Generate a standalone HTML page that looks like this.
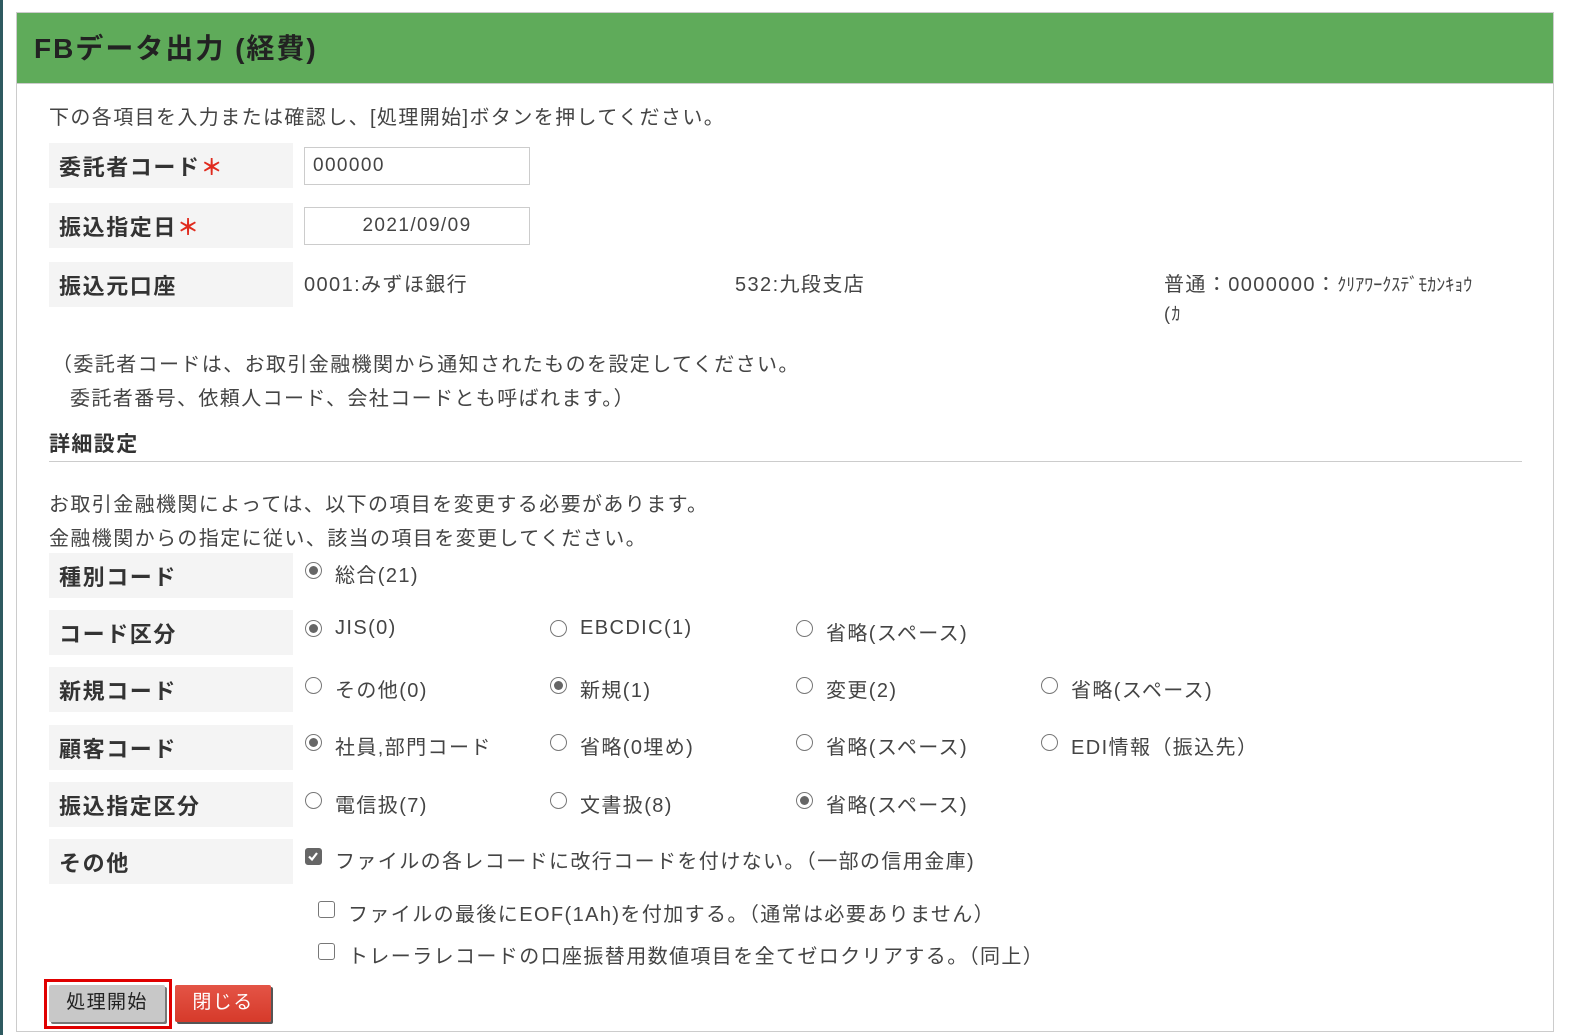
<!DOCTYPE html>
<html><head><meta charset="utf-8"><style>
*{margin:0;padding:0;box-sizing:border-box}
body{width:1573px;height:1035px;background:#fff;position:relative;overflow:hidden;font-family:"Liberation Sans","Noto Sans CJK JP",sans-serif;color:#444;font-size:20px;letter-spacing:1.4px}
.a{position:absolute;white-space:nowrap}
.lb{position:absolute;left:49px;width:244px;height:45px;background:#f4f4f4;font-weight:bold;font-size:22px;color:#333;padding:7px 0 0 10px;letter-spacing:1.6px}
.req{color:#e02b1e}
.r{position:absolute;width:17px;height:17px;border:1.5px solid #777;border-radius:50%;background:#fff}
.r.on::after{content:"";position:absolute;left:2.5px;top:2.5px;width:9px;height:9px;border-radius:50%;background:#666}
.cb{position:absolute;width:17px;height:17px;border:1.5px solid #777;border-radius:3px;background:#fff}
.cb.on{background:#666;border-color:#666}
.inp{position:absolute;left:304px;width:226px;height:38px;border:1.5px solid #ccc;background:#fff;padding:7px 8px;font-size:19px}
</style></head><body>
<div class="a" style="left:0;top:0;width:3px;height:1035px;background:#2e5a60"></div>
<div class="a" style="left:16px;top:12px;width:1538px;height:1020px;border:1px solid #ccc;border-top:none"></div>
<div class="a" style="left:16px;top:12px;width:1538px;height:72px;background:#5fab5a;border:1px solid #ccc"></div>
<div class="a" style="left:34px;top:27px;font-size:28px;font-weight:bold;color:#222;letter-spacing:2px">FBデータ出力 (経費)</div>
<div class="a" style="left:49px;top:101px">下の各項目を入力または確認し、[処理開始]ボタンを押してください。</div>

<div class="lb" style="top:143px">委託者コード<span class="req">＊</span></div>
<div class="inp" style="top:147px">000000</div>
<div class="lb" style="top:203px">振込指定日<span class="req">＊</span></div>
<div class="inp" style="top:207px;text-align:center">2021/09/09</div>
<div class="lb" style="top:262px">振込元口座</div>
<div class="a" style="left:304px;top:268px">0001:みずほ銀行</div>
<div class="a" style="left:735px;top:268px">532:九段支店</div>
<div class="a" style="left:1164px;top:268px">普通：0000000：<span style="font-size:18px;letter-spacing:0">ｸﾘｱﾜｰｸｽﾃﾞﾓｶﾝｷｮｳ</span></div>
<div class="a" style="left:1164px;top:300px;font-size:18px">(ｶ</div>

<div class="a" style="left:52px;top:348px">（委託者コードは、お取引金融機関から通知されたものを設定してください。</div>
<div class="a" style="left:70px;top:382px">委託者番号、依頼人コード、会社コードとも呼ばれます。）</div>
<div class="a" style="left:49px;top:428px;font-weight:bold;font-size:21px;color:#333">詳細設定</div>
<div class="a" style="left:49px;top:461px;width:1473px;height:1px;background:#ccc"></div>
<div class="a" style="left:49px;top:488px">お取引金融機関によっては、以下の項目を変更する必要があります。</div>
<div class="a" style="left:49px;top:522px">金融機関からの指定に従い、該当の項目を変更してください。</div>

<div class="lb" style="top:553px">種別コード</div>
<div class="r on" style="left:305px;top:562px"></div><div class="a" style="left:335px;top:559px">総合(21)</div>

<div class="lb" style="top:610px">コード区分</div>
<div class="r on" style="left:305px;top:620px"></div><div class="a" style="left:335px;top:617px">JIS(0)</div>
<div class="r" style="left:550px;top:620px"></div><div class="a" style="left:580px;top:617px">EBCDIC(1)</div>
<div class="r" style="left:796px;top:620px"></div><div class="a" style="left:826px;top:617px">省略(スペース)</div>

<div class="lb" style="top:667px">新規コード</div>
<div class="r" style="left:305px;top:677px"></div><div class="a" style="left:335px;top:674px">その他(0)</div>
<div class="r on" style="left:550px;top:677px"></div><div class="a" style="left:580px;top:674px">新規(1)</div>
<div class="r" style="left:796px;top:677px"></div><div class="a" style="left:826px;top:674px">変更(2)</div>
<div class="r" style="left:1041px;top:677px"></div><div class="a" style="left:1071px;top:674px">省略(スペース)</div>

<div class="lb" style="top:725px">顧客コード</div>
<div class="r on" style="left:305px;top:734px"></div><div class="a" style="left:335px;top:731px">社員,部門コード</div>
<div class="r" style="left:550px;top:734px"></div><div class="a" style="left:580px;top:731px">省略(0埋め)</div>
<div class="r" style="left:796px;top:734px"></div><div class="a" style="left:826px;top:731px">省略(スペース)</div>
<div class="r" style="left:1041px;top:734px"></div><div class="a" style="left:1071px;top:731px">EDI情報（振込先）</div>

<div class="lb" style="top:782px">振込指定区分</div>
<div class="r" style="left:305px;top:792px"></div><div class="a" style="left:335px;top:789px">電信扱(7)</div>
<div class="r" style="left:550px;top:792px"></div><div class="a" style="left:580px;top:789px">文書扱(8)</div>
<div class="r on" style="left:796px;top:792px"></div><div class="a" style="left:826px;top:789px">省略(スペース)</div>

<div class="lb" style="top:839px">その他</div>
<div class="cb on" style="left:305px;top:848px"><svg width="14" height="14" viewBox="0 0 14 14" style="position:absolute;left:0;top:0"><path d="M3 7.5l3 3 5-6.5" stroke="#fff" stroke-width="2.2" fill="none"/></svg></div>
<div class="a" style="left:335px;top:845px">ファイルの各レコードに改行コードを付けない。（一部の信用金庫)</div>
<div class="cb" style="left:318px;top:901px"></div>
<div class="a" style="left:348px;top:898px">ファイルの最後にEOF(1Ah)を付加する。（通常は必要ありません）</div>
<div class="cb" style="left:318px;top:943px"></div>
<div class="a" style="left:348px;top:940px">トレーラレコードの口座振替用数値項目を全てゼロクリアする。（同上）</div>

<div class="a" style="left:44px;top:979px;width:128px;height:50px;border:3px solid #e00000"></div>
<div class="a" style="left:49px;top:985px;width:116px;height:37px;background:#c8c8c8;border-radius:2px;box-shadow:2px 2px 0 #777;text-align:center;line-height:36px;color:#222;font-size:19px">処理開始</div>
<div class="a" style="left:175px;top:985px;width:96px;height:37px;background:linear-gradient(#e45446,#d63a2a);border-radius:2px;box-shadow:2px 2px 0 #555;text-align:center;line-height:36px;color:#fff;font-size:19px">閉じる</div>
</body></html>
